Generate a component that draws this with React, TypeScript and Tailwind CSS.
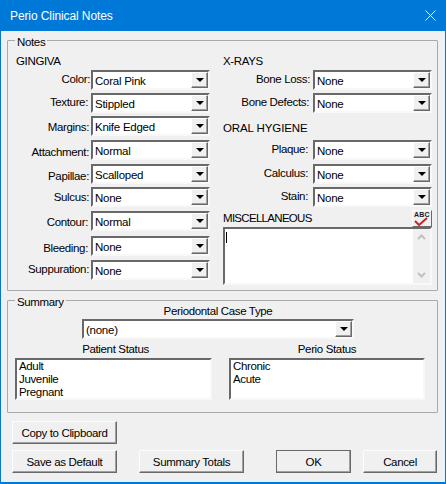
import { ReactNode } from "react";

const font = "font-['Liberation_Sans',Arial,sans-serif]";

const Combo = ({ value, className }: { value: string; className: string }) => (
  <div className={`flex h-[20px] shrink-0 border-2 border-t-[#696969] border-l-[#696969] border-r-[#f8f8f8] border-b-[#f8f8f8] bg-white ${className}`}>
    <span className="flex-1 pl-[2px] leading-[18px] tracking-[-0.25px] text-black">{value}</span>
    <span className="flex w-[17px] items-center justify-center border border-t-white border-l-white border-r-[#696969] border-b-[#696969] bg-[#f0f0f0] shadow-[inset_-1px_-1px_0_#a0a0a0]">
      <svg width="8" height="4" viewBox="0 0 8 4">
        <path d="M0 0h8L4 4z" fill="#000" />
      </svg>
    </span>
  </div>
);

const Group = ({ title, className, children }: { title: string; className: string; children: ReactNode }) => (
  <section className={`relative rounded-[1px] border border-[#a9a9a9] ${className}`}>
    <span className="absolute left-[7px] top-[-6px] bg-[#f0f0f0] px-[2px] leading-[14px]">{title}</span>
    {children}
  </section>
);

const Button = ({ label, className }: { label: string; className: string }) => (
  <button className={`h-[23px] shrink-0 border border-t-[#fcfcfc] border-l-[#fcfcfc] border-r-[#696969] border-b-[#696969] bg-[#f0f0f0] leading-[20px] text-black shadow-[inset_-1px_-1px_0_#a0a0a0] ${className}`}>
    {label}
  </button>
);

const gingiva = [
  { label: "Color:", value: "Coral Pink", row: "mt-[2px]", text: "pr-[1px] pb-[2px]" },
  { label: "Texture:", value: "Stippled", row: "mt-[3px]", text: "pr-[3px] pb-[2px]" },
  { label: "Margins:", value: "Knife Edged", row: "mt-[3px]", text: "pr-[2px] pt-[1px]" },
  { label: "Attachment:", value: "Normal", row: "mt-[4px]", text: "pr-[2px] pt-[3px]" },
  { label: "Papillae:", value: "Scalloped", row: "mt-[4px]", text: "pr-[2px] pt-[3px]" },
  { label: "Sulcus:", value: "None", row: "mt-[3px]", text: "pr-[2px]" },
  { label: "Contour:", value: "Normal", row: "mt-[4px]", text: "pr-[3px] pt-[1px]" },
  { label: "Bleeding:", value: "None", row: "mt-[5px]", text: "pr-[3px] pt-[3px]" },
  { label: "Suppuration:", value: "None", row: "mt-[4px]", text: "pr-[2px] pb-[2px]" },
];

const xrays = [
  { label: "Bone Loss:", row: "mt-[2px]", text: "pr-[3px] pb-[2px]" },
  { label: "Bone Defects:", row: "mt-[3px]", text: "pr-[4px] pb-[2px]" },
];

const hygiene = [
  { label: "Plaque:", row: "mt-[5px]", text: "pr-[5px] pb-[2px]" },
  { label: "Calculus:", row: "mt-[4px]", text: "pr-[5px] pb-[2px]" },
  { label: "Stain:", row: "mt-[3px]", text: "pr-[5px] pb-[2px]" },
];

const App = () => {
  return (
    <div className={`flex h-[484px] w-[446px] flex-col overflow-hidden border border-t-0 border-b-2 border-[#0078d7] bg-[#f0f0f0] text-[11.5px] tracking-[-0.35px] text-black ${font}`}>
      <header className="-mx-px flex h-[31px] shrink-0 items-center justify-between bg-[#0078d7] px-[10px] text-[12px] tracking-[-0.1px] text-white">
        <span>Perio Clinical Notes</span>
        <svg width="11" height="11" viewBox="0 0 11 11" stroke="#fff" strokeWidth="1">
          <path d="M.5.5l10 10M10.5.5l-10 10" />
        </svg>
      </header>

      <main className="flex flex-1 flex-col pl-[6px]">
        <Group title="Notes" className="mt-[9px] h-[251px] w-[431px]">
          <div className="flex pt-[13px]">
            <div className="w-[202px]">
              <h3 className="h-[14px] pl-[8px] leading-[14px]">GINGIVA</h3>
              {gingiva.map((g) => (
                <div key={g.label} className={`flex items-center ${g.row}`}>
                  <span className={`w-[83px] text-right leading-[14px] ${g.text}`}>{g.label}</span>
                  <Combo value={g.value} className="w-[119px]" />
                </div>
              ))}
            </div>
            <div className="ml-[13px] w-[209px]">
              <h3 className="h-[14px] leading-[14px]">X-RAYS</h3>
              {xrays.map((x) => (
                <div key={x.label} className={`flex items-center ${x.row}`}>
                  <span className={`w-[90px] text-right leading-[14px] ${x.text}`}>{x.label}</span>
                  <Combo value="None" className="w-[119px]" />
                </div>
              ))}
              <h3 className="mt-[8px] h-[14px] leading-[14px] tracking-[-0.1px]">ORAL HYGIENE</h3>
              {hygiene.map((h) => (
                <div key={h.label} className={`flex items-center ${h.row}`}>
                  <span className={`w-[90px] text-right leading-[14px] ${h.text}`}>{h.label}</span>
                  <Combo value="None" className="w-[119px]" />
                </div>
              ))}
              <div className="mt-px flex h-[19px] items-center justify-between">
                <span className="leading-[14px] tracking-[-0.7px]">MISCELLANEOUS</span>
                <span className="relative flex h-[17px] w-[20px] flex-col items-center self-end border border-t-white border-l-white border-r-[#696969] border-b-[#696969] bg-[#f0f0f0]">
                  <span className="text-[7px] font-bold leading-[7px] tracking-[0.2px] text-[#222]">ABC</span>
                  <svg width="15" height="9" viewBox="0 0 15 9" className="absolute bottom-0 left-[1px]">
                    <path d="M1 4l4 4 8-7" fill="none" stroke="#d0202a" strokeWidth="2" />
                  </svg>
                </span>
              </div>
              <div className="flex h-[58px] border-2 border-t-[#696969] border-l-[#696969] border-r-[#f8f8f8] border-b-[#f8f8f8] bg-white">
                <div className="flex-1 pl-px pt-[3px]">
                  <div className="h-[11px] w-px bg-black" />
                </div>
                <div className="flex w-[17px] flex-col items-center justify-between bg-[#f0f0f0] py-[5px]">
                  <svg width="9" height="6" viewBox="0 0 9 6" fill="none" stroke="#c0c0c0" strokeWidth="2">
                    <path d="M1 5l3.5-3.5L8 5" />
                  </svg>
                  <svg width="9" height="6" viewBox="0 0 9 6" fill="none" stroke="#c0c0c0" strokeWidth="2">
                    <path d="M1 1l3.5 3.5L8 1" />
                  </svg>
                </div>
              </div>
            </div>
          </div>
        </Group>

        <Group title="Summary" className="mt-[9px] h-[113px] w-[431px]">
          <p className="pt-[3px] pr-[9px] text-center leading-[14px]">Periodontal Case Type</p>
          <Combo value="(none)" className="ml-[74px] mt-px w-[272px]" />
          <div className="flex pl-[7px]">
            <div className="w-[197px]">
              <p className="pt-[3px] pb-[2px] pl-[4px] text-center leading-[14px]">Patient Status</p>
              <div className="h-[42px] border-2 border-t-[#696969] border-l-[#696969] border-r-[#f8f8f8] border-b-[#f8f8f8] bg-white pl-[2px] leading-[13px]">
                <div>Adult</div>
                <div>Juvenile</div>
                <div>Pregnant</div>
              </div>
            </div>
            <div className="ml-[17px] w-[196px]">
              <p className="pt-[3px] pb-[2px] text-center leading-[14px]">Perio Status</p>
              <div className="h-[42px] border-2 border-t-[#696969] border-l-[#696969] border-r-[#f8f8f8] border-b-[#f8f8f8] bg-white pl-[2px] leading-[13px]">
                <div>Chronic</div>
                <div>Acute</div>
              </div>
            </div>
          </div>
        </Group>

        <div className="mt-[8px] pl-[5px]">
          <Button label="Copy to Clipboard" className="block w-[105px]" />
          <div className="mt-[6px] flex">
            <Button label="Save as Default" className="w-[105px]" />
            <Button label="Summary Totals" className="ml-[22px] w-[105px]" />
            <Button label="OK" className="ml-[32px] w-[75px] outline outline-1 -outline-offset-1 outline-[#696969]" />
            <Button label="Cancel" className="ml-[12px] w-[74px]" />
          </div>
        </div>
      </main>
    </div>
  );
};

export default App;
